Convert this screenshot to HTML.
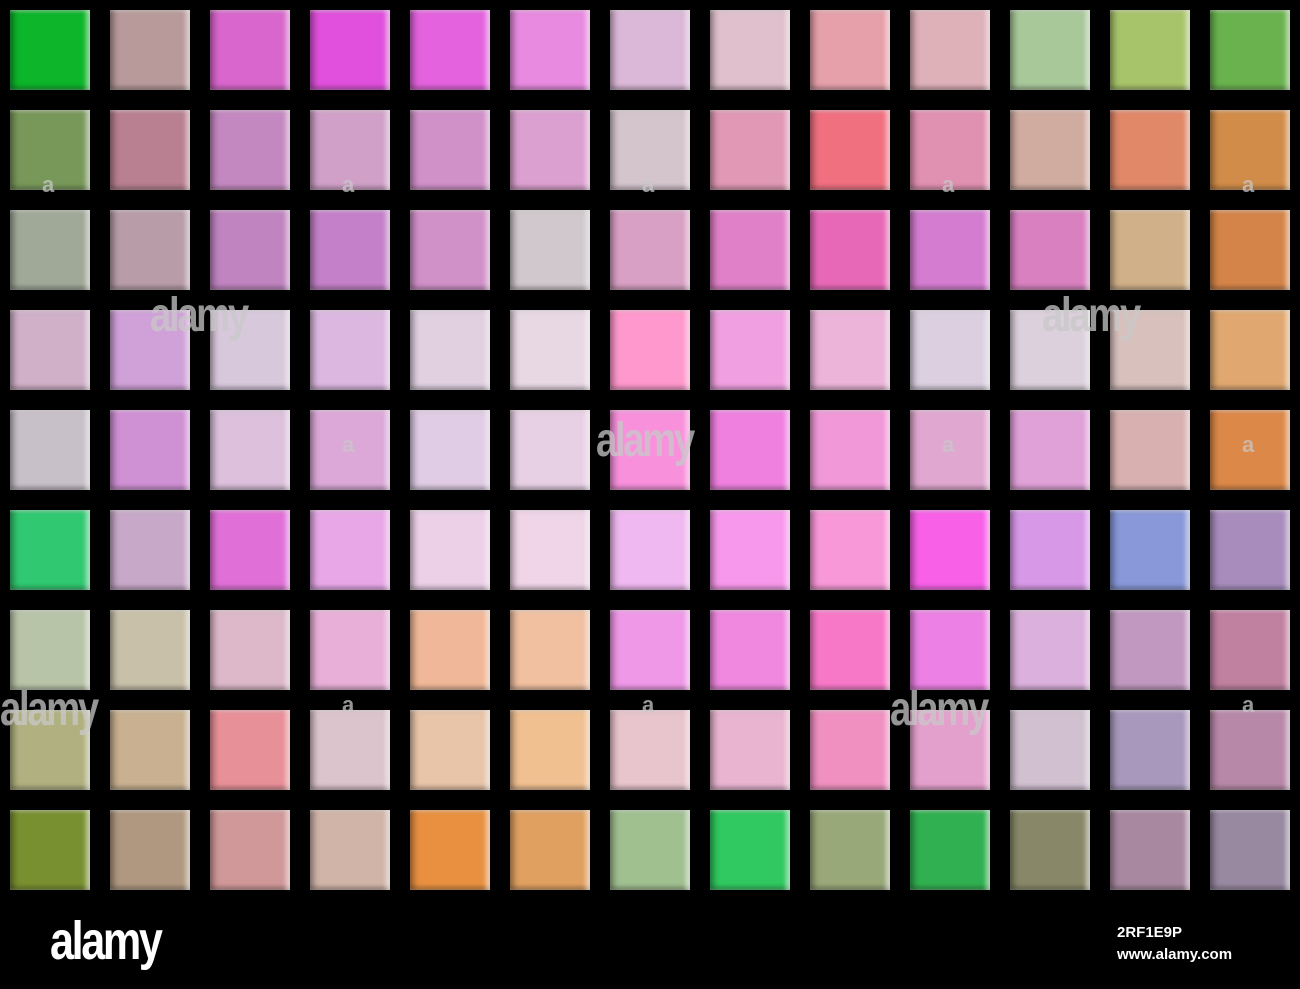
<!DOCTYPE html>
<html><head><meta charset="utf-8"><style>
body{margin:0;background:#000;width:1300px;height:989px;overflow:hidden;position:relative;font-family:"Liberation Sans",sans-serif}
.g{position:absolute;left:10px;top:10px;display:grid;grid-template-columns:repeat(13,80px);grid-auto-rows:80px;gap:20px}
.g div{box-shadow:inset -5px 0 5px -1px rgba(255,255,255,.55),inset 5px 0 6px -1px rgba(0,0,0,.35),inset 0 3px 3px -1px rgba(255,255,255,.3),inset 0 -4px 4px -1px rgba(0,0,0,.3)}
.logo{position:absolute;left:50px;top:910px;color:#fff;font-weight:bold;font-size:54px;letter-spacing:-3px;transform:scaleX(.8);transform-origin:left}
.id{position:absolute;left:1117px;top:924px;color:#fff;font-size:15px;font-weight:bold}
.url{position:absolute;left:1117px;top:946px;color:#fff;font-size:15px;font-weight:bold}
.w{position:absolute;color:rgba(200,200,200,.75);font-weight:bold;font-size:48px;letter-spacing:-3px;transform:scaleX(.8);transform-origin:left}
.a{position:absolute;color:rgba(200,200,200,.75);font-weight:bold;font-size:22px}
</style></head><body>
<div class="g">
<div style="background:#0db52a"></div><div style="background:#b89a9a"></div><div style="background:#d966cc"></div><div style="background:#e050dc"></div><div style="background:#e462de"></div><div style="background:#e88ae0"></div><div style="background:#dcb8d8"></div><div style="background:#dfc0cc"></div><div style="background:#e6a0aa"></div><div style="background:#deb0b8"></div><div style="background:#a8c89a"></div><div style="background:#a8c46a"></div><div style="background:#6ab24e"></div>
<div style="background:#78985a"></div><div style="background:#b88090"></div><div style="background:#c488c0"></div><div style="background:#d0a0c8"></div><div style="background:#d090c8"></div><div style="background:#dca0d0"></div><div style="background:#d4c4cc"></div><div style="background:#e098b4"></div><div style="background:#f07080"></div><div style="background:#e090b0"></div><div style="background:#d0aca0"></div><div style="background:#e08868"></div><div style="background:#d08c48"></div>
<div style="background:#a0a898"></div><div style="background:#b89ca8"></div><div style="background:#c084c0"></div><div style="background:#c480c8"></div><div style="background:#d090c8"></div><div style="background:#d0c8cc"></div><div style="background:#d8a0c4"></div><div style="background:#e080c8"></div><div style="background:#e868b8"></div><div style="background:#d47cd0"></div><div style="background:#d880c0"></div><div style="background:#d0b088"></div><div style="background:#d48448"></div>
<div style="background:#d0b0c8"></div><div style="background:#d0a0d8"></div><div style="background:#d8c8dc"></div><div style="background:#dcb8e0"></div><div style="background:#e0d0e0"></div><div style="background:#e8d8e4"></div><div style="background:#ff98cc"></div><div style="background:#f0a0e0"></div><div style="background:#ecb4d8"></div><div style="background:#dcd0e0"></div><div style="background:#dcd0dc"></div><div style="background:#d8c0bc"></div><div style="background:#e0a870"></div>
<div style="background:#c8c0c8"></div><div style="background:#d090d4"></div><div style="background:#dcc0dc"></div><div style="background:#dca8d8"></div><div style="background:#e0cce4"></div><div style="background:#e8d0e4"></div><div style="background:#f890dc"></div><div style="background:#f080e0"></div><div style="background:#f098d8"></div><div style="background:#e0a8d0"></div><div style="background:#e0a0d8"></div><div style="background:#d8b0b0"></div><div style="background:#dc8848"></div>
<div style="background:#30c870"></div><div style="background:#c8a8c8"></div><div style="background:#e070d8"></div><div style="background:#e8a8e8"></div><div style="background:#ecd0e8"></div><div style="background:#f0d4e8"></div><div style="background:#f0b8f0"></div><div style="background:#f898ec"></div><div style="background:#f898d8"></div><div style="background:#f860e8"></div><div style="background:#d898e8"></div><div style="background:#8898d8"></div><div style="background:#a88cbc"></div>
<div style="background:#b8c4a8"></div><div style="background:#c8c0a8"></div><div style="background:#dcb8c8"></div><div style="background:#e8b0d8"></div><div style="background:#f0b898"></div><div style="background:#f0c0a0"></div><div style="background:#f098e8"></div><div style="background:#f088e0"></div><div style="background:#f878c8"></div><div style="background:#ec80e4"></div><div style="background:#dcb0dc"></div><div style="background:#c098c0"></div><div style="background:#c080a0"></div>
<div style="background:#b0b080"></div><div style="background:#c8b090"></div><div style="background:#e89098"></div><div style="background:#dcc4cc"></div><div style="background:#e8c4a8"></div><div style="background:#f0c090"></div><div style="background:#e8c4cc"></div><div style="background:#e8b4d0"></div><div style="background:#f090c0"></div><div style="background:#e4a0cc"></div><div style="background:#d0c0d0"></div><div style="background:#a898bc"></div><div style="background:#b888a8"></div>
<div style="background:#789030"></div><div style="background:#b09880"></div><div style="background:#d09898"></div><div style="background:#d0b4a8"></div><div style="background:#e89040"></div><div style="background:#e0a060"></div><div style="background:#a0c090"></div><div style="background:#30c860"></div><div style="background:#98a878"></div><div style="background:#30b050"></div><div style="background:#888868"></div><div style="background:#a888a0"></div><div style="background:#9888a0"></div>
</div>
<div class="w" style="left:150px;top:288px">alamy</div>
<div class="w" style="left:1042px;top:288px">alamy</div>
<div class="w" style="left:596px;top:413px">alamy</div>
<div class="w" style="left:0px;top:682px">alamy</div>
<div class="w" style="left:890px;top:682px">alamy</div>
<div class="a" style="left:42px;top:172px">a</div>
<div class="a" style="left:342px;top:172px">a</div>
<div class="a" style="left:642px;top:172px">a</div>
<div class="a" style="left:942px;top:172px">a</div>
<div class="a" style="left:1242px;top:172px">a</div>
<div class="a" style="left:342px;top:432px">a</div>
<div class="a" style="left:942px;top:432px">a</div>
<div class="a" style="left:1242px;top:432px">a</div>
<div class="a" style="left:342px;top:692px">a</div>
<div class="a" style="left:642px;top:692px">a</div>
<div class="a" style="left:1242px;top:692px">a</div>
<div class="logo">alamy</div>
<div class="id">2RF1E9P</div>
<div class="url">www.alamy.com</div>
</body></html>
